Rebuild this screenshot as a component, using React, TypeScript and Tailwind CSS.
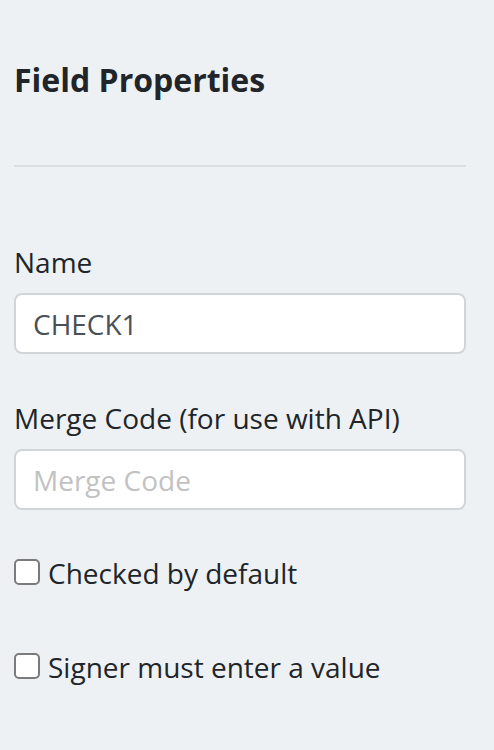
export default function App() {
  return (
    <div className="min-h-[750px] bg-[#edf1f4] pl-[14px] pr-[28px] font-['Open_Sans',sans-serif] text-[#212529]">
      {/* HEADER */}
      <h1 className="pt-[61px] text-[32px] leading-[38px] font-bold">
        Field Properties
      </h1>
      <div className="mt-[66px] h-[2px] bg-[#dcdfe2]" />

      {/* FIELDS */}
      <div className="pt-[74px]">
        <TextField label="Name" value="CHECK1" />
      </div>
      <div className="pt-[43px]">
        <TextField label="Merge Code (for use with API)" placeholder="Merge Code" />
      </div>

      {/* OPTIONS */}
      <div className="pt-[42px]">
        <Check label="Checked by default" />
      </div>
      <div className="pt-[52px]">
        <Check label="Signer must enter a value" />
      </div>
    </div>
  );
}

function TextField({
  label,
  value,
  placeholder,
}: {
  label: string;
  value?: string;
  placeholder?: string;
}) {
  return (
    <div>
      <label className="block text-[28px] leading-[42px] mb-[10px]">{label}</label>
      <input
        readOnly
        defaultValue={value}
        placeholder={placeholder}
        className="block w-full h-[61px] rounded-[8px] border-2 border-[#d0d5da] bg-white px-[17px] text-[28px] text-[#495057] placeholder:text-[#c2c2c2] outline-none"
      />
    </div>
  );
}

function Check({ label }: { label: string }) {
  return (
    <label className="flex items-start gap-[8px] text-[28px] leading-[42px]">
      <input
        type="checkbox"
        className="mt-[7px] h-[26px] w-[26px] shrink-0 appearance-none rounded-[5px] border-2 border-[#7b7b7b] bg-white"
      />
      <span>{label}</span>
    </label>
  );
}
